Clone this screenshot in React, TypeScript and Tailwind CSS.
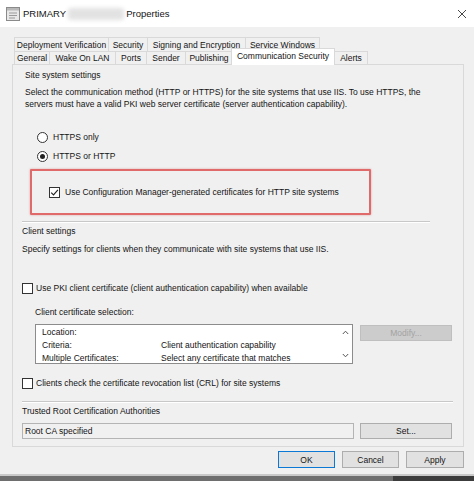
import React from "react";

const font = { fontFamily: '"Liberation Sans", Arial, sans-serif' };

function Checkbox({ checked = false }: { checked?: boolean }) {
  return (
    <div className="w-[11px] h-[11px] border border-[#333333] bg-white flex items-center justify-center shrink-0">
      {checked && (
        <svg width="9" height="9" viewBox="0 0 9 9">
          <path d="M1.2 4.6 L3.5 6.9 L7.9 1.8" fill="none" stroke="#222" strokeWidth="1.1" />
        </svg>
      )}
    </div>
  );
}

function Radio({ checked = false }: { checked?: boolean }) {
  return (
    <div className="w-[11px] h-[11px] rounded-full border border-[#333333] bg-white flex items-center justify-center shrink-0">
      {checked && <div className="w-[5px] h-[5px] rounded-full bg-[#222222]" />}
    </div>
  );
}

function Tab({ w, label }: { w: string; label: string }) {
  return (
    <div className={`${w} h-full border-l border-t border-[#d9d9d9] flex items-center justify-center whitespace-nowrap`}>
      {label}
    </div>
  );
}

export default function App() {
  return (
    <div
      className="w-[474px] h-[481px] bg-[#f0f0f0] flex flex-col overflow-hidden text-[8.5px] leading-[12px] text-[#141414]"
      style={font}
    >
      {/* Title bar */}
      <div className="h-[27px] bg-white flex items-center pl-[6px] pr-[7px] shrink-0">
        <svg width="14" height="14" viewBox="0 0 14 14" className="shrink-0">
          <rect x="0.5" y="0.5" width="13" height="13" fill="#e8e8e8" stroke="#8a8a8a" />
          <rect x="1" y="1" width="12" height="2.5" fill="#b8b8b8" />
          <line x1="3" y1="6" x2="11" y2="6" stroke="#9a9a9a" />
          <line x1="3" y1="8.5" x2="11" y2="8.5" stroke="#9a9a9a" />
          <line x1="3" y1="11" x2="9" y2="11" stroke="#9a9a9a" />
        </svg>
        <span className="ml-[3px] text-[9.5px]">PRIMARY</span>
        <div className="ml-[2px] w-[56px] h-[12px] bg-[#e2e2e2] rounded-[3px] blur-[2px]" />
        <span className="ml-[2px] text-[9.5px]">Properties</span>
        <div className="flex-1" />
        <svg width="10" height="10" viewBox="0 0 10 10">
          <path d="M1 1 L9 9 M9 1 L1 9" stroke="#333" strokeWidth="0.9" />
        </svg>
      </div>

      {/* Tabs */}
      <div className="pt-[10px] pl-[14px] shrink-0">
        <div className="flex h-[14px]">
          <Tab w="w-[94px]" label="Deployment Verification" />
          <Tab w="w-[39px]" label="Security" />
          <Tab w="w-[98px]" label="Signing and Encryption" />
          <div className="w-[75px] h-full border-l border-t border-r border-[#d9d9d9] flex items-center justify-center whitespace-nowrap">
            Service Windows
          </div>
        </div>
        <div className="flex h-[13px] items-end">
          <div className="flex h-[13px]">
            <Tab w="w-[35px]" label="General" />
            <Tab w="w-[66px]" label="Wake On LAN" />
            <Tab w="w-[31px]" label="Ports" />
            <Tab w="w-[39px]" label="Sender" />
            <Tab w="w-[47px]" label="Publishing" />
          </div>
          <div className="relative z-10 w-[104px] h-[17px] -mb-[1px] -ml-[1px] bg-white border border-b-0 border-[#d9d9d9] flex items-center justify-center whitespace-nowrap pb-[2px]">
            Communication Security
          </div>
          <div className="w-[33px] h-[13px] border-t border-r border-[#d9d9d9] flex items-center justify-center">
            Alerts
          </div>
        </div>
      </div>

      {/* Panel */}
      <div className="ml-[12px] w-[452px] h-[383px] border border-[#d9d9d9] bg-[#f0f0f0] pl-[9px] flex flex-col shrink-0">
        <div className="pl-[3px] flex flex-col">
          <div className="pt-[4px]">Site system settings</div>
          <div className="mt-[5px]">
            <div className="whitespace-nowrap">
              Select the communication method (HTTP or HTTPS) for the site systems that use IIS. To use HTTPS, the
            </div>
            <div className="whitespace-nowrap">
              servers must have a valid PKI web server certificate (server authentication capability).
            </div>
          </div>
          <div className="mt-[21px] h-[12px] flex items-center pl-[12px] gap-[5px]">
            <Radio />
            <span>HTTPS only</span>
          </div>
          <div className="mt-[7px] h-[12px] flex items-center pl-[12px] gap-[5px]">
            <Radio checked />
            <span>HTTPS or HTTP</span>
          </div>
          <div className="mt-[7px] ml-[5px] w-[341px] h-[46px] border-2 border-[#e06a6a] rounded-[1px] shadow-[0_0_2px_rgba(200,60,60,0.5)] flex items-center pl-[17px] gap-[5px]">
            <Checkbox checked />
            <span className="whitespace-nowrap">Use Configuration Manager-generated certificates for HTTP site systems</span>
          </div>
        </div>
        <div className="mt-[6px] w-[408px] h-[2px] border-t border-[#c8c8c8] border-b border-b-white" />
        <div className="mt-[2px]">Client settings</div>
        <div className="mt-[6px] whitespace-nowrap">
          Specify settings for clients when they communicate with site systems that use IIS.
        </div>
        <div className="mt-[27px] h-[12px] flex items-center gap-[3px]">
          <Checkbox />
          <span className="whitespace-nowrap">Use PKI client certificate (client authentication capability) when available</span>
        </div>
        <div className="mt-[12px] pl-[13px]">Client certificate selection:</div>
        <div className="mt-[6px] pl-[13px] flex items-start gap-[7px]">
          <div className="w-[318px] h-[40px] bg-white border border-[#8c8c8c] flex overflow-hidden">
            <div className="flex-1 pl-[6px] pt-[1px] leading-[13px]">
              <div className="flex"><span className="w-[119px]">Location:</span></div>
              <div className="flex"><span className="w-[119px]">Criteria:</span><span>Client authentication capability</span></div>
              <div className="flex"><span className="w-[119px]">Multiple Certificates:</span><span>Select any certificate that matches</span></div>
            </div>
            <div className="w-[14px] flex flex-col items-center justify-between py-[5px]">
              <svg width="7" height="5" viewBox="0 0 7 5"><path d="M0.8 4 L3.5 1.2 L6.2 4" fill="none" stroke="#555" strokeWidth="1" /></svg>
              <svg width="7" height="5" viewBox="0 0 7 5"><path d="M0.8 1 L3.5 3.8 L6.2 1" fill="none" stroke="#555" strokeWidth="1" /></svg>
            </div>
          </div>
          <div className="mt-[1px] w-[92px] h-[16px] bg-[#cccccc] border border-[#bfbfbf] flex items-center justify-center text-[#a3a3a3]">
            Modify...
          </div>
        </div>
        <div className="mt-[13px] h-[12px] flex items-center gap-[3px]">
          <Checkbox />
          <span className="whitespace-nowrap">Clients check the certificate revocation list (CRL) for site systems</span>
        </div>
        <div className="mt-[12px] w-[431px] h-[2px] border-t border-[#c8c8c8] border-b border-b-white" />
        <div className="mt-[2px]">Trusted Root Certification Authorities</div>
        <div className="mt-[6px] flex items-center gap-[6px]">
          <div className="w-[332px] h-[16px] bg-[#f0f0f0] border border-[#b4b4b4] flex items-center pl-[2px]">
            Root CA specified
          </div>
          <div className="w-[92px] h-[16px] bg-[#e1e1e1] border border-[#adadad] flex items-center justify-center">
            Set...
          </div>
        </div>
      </div>

      {/* Buttons */}
      <div className="mt-[4px] h-[17px] flex justify-end pr-[10px] gap-[7px] shrink-0">
        <div className="w-[57px] h-full bg-[#e1e1e1] border border-[#0a78d4] flex items-center justify-center">OK</div>
        <div className="w-[57px] h-full bg-[#e1e1e1] border border-[#adadad] flex items-center justify-center">Cancel</div>
        <div className="w-[58px] h-full bg-[#e1e1e1] border border-[#adadad] flex items-center justify-center">Apply</div>
      </div>

      {/* Bottom strip */}
      <div className="mt-[6px] flex-1 flex flex-col">
        <div className="h-[2px] bg-[#c9c9c9]" />
        <div className="flex-1 flex">
          <div className="flex-1 bg-[#6e6e6e]" />
          <div className="w-[81px] bg-[#3c3c3c]" />
        </div>
      </div>
    </div>
  );
}
